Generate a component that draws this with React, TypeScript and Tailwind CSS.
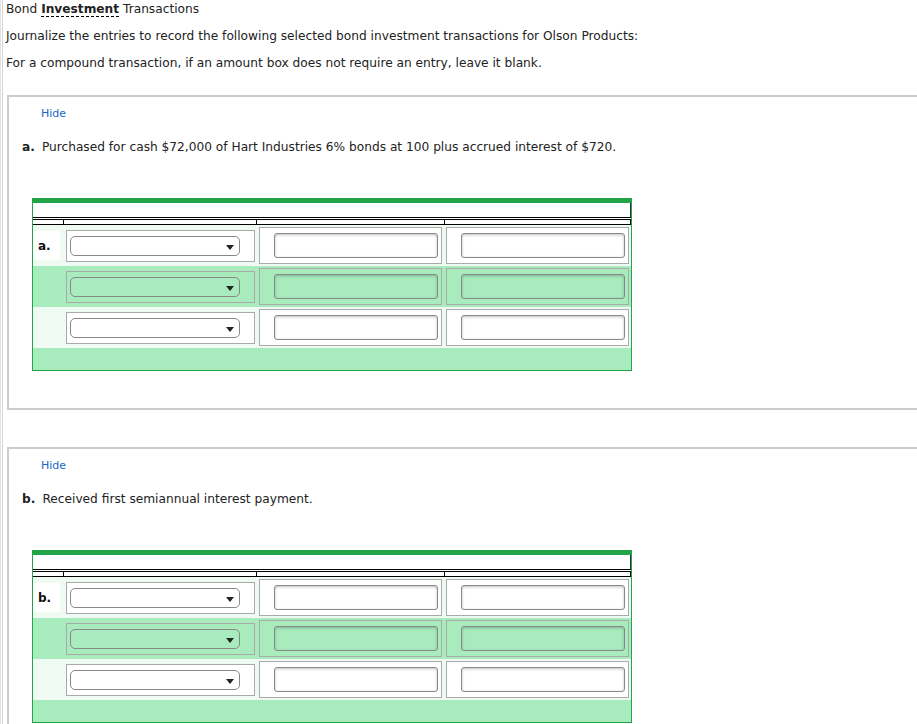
const font = { fontFamily: '"DejaVu Sans", Verdana, sans-serif' };

function Arrow() {
  return (
    <svg className="absolute right-[5px] top-[8px] w-[8px] h-[5px]" viewBox="0 0 8 5">
      <polygon points="0,0 8,0 4,5" fill="#222" />
    </svg>
  );
}

function EntryRow({ label, tone }: { label?: string; tone: "light" | "green" }) {
  const bg = tone === "green" ? "bg-[#a8ecbd]" : "bg-[#effaf2]";
  const fieldBg = tone === "green" ? "bg-[#a8ecbd]" : "bg-white";
  return (
    <div className={`flex h-[41px] ${bg}`}>
      <div className="w-[30px] pt-[6px]">
        {label && (
          <div className="h-[29px] w-[27px] bg-white flex items-center pl-[5px] text-[12px] font-bold text-[#111]">
            {label}
          </div>
        )}
      </div>
      <div className="w-[193px] pl-[3px] pt-[5px]">
        <div className={`h-[32px] w-[189px] border border-[#aaa] px-[3px] pt-[5px] ${fieldBg}`}>
          <div className={`relative h-[20px] w-[170px] rounded-[5px] border border-[#888] ${fieldBg}`}>
            <Arrow />
          </div>
        </div>
      </div>
      <div className="w-[188px] pl-[3px] pt-[2px]">
        <div className={`h-[37px] w-[183px] border border-[#aaa] pl-[14px] pt-[5px] ${fieldBg}`}>
          <div
            className={`h-[25px] w-[164px] rounded-[3px] border border-[#888] shadow-[inset_0_1px_3px_rgba(0,0,0,0.25)] ${fieldBg}`}
          />
        </div>
      </div>
      <div className="w-[187px] pl-[2px] pt-[2px]">
        <div className={`h-[37px] w-[183px] border border-[#aaa] pl-[14px] pt-[5px] ${fieldBg}`}>
          <div
            className={`h-[25px] w-[164px] rounded-[3px] border border-[#888] shadow-[inset_0_1px_3px_rgba(0,0,0,0.25)] ${fieldBg}`}
          />
        </div>
      </div>
    </div>
  );
}

function JournalTable({ label }: { label: string }) {
  return (
    <div className="ml-[23px] w-[600px] border-x border-b border-[#22a54a] border-t-[5px]">
      <div className="h-[14px] bg-white border-r border-[#333]" />
      <div className="h-[2px] border-t border-black bg-white" />
      <div className="flex h-[6px] border-y border-black bg-white">
        <div className="w-[30px]" />
        <div className="w-[193px] border-l border-black" />
        <div className="w-[188px] border-l border-black" />
        <div className="flex-1 border-x border-black" />
      </div>
      <EntryRow label={label} tone="light" />
      <EntryRow tone="green" />
      <EntryRow tone="light" />
      <div className="h-[22px] bg-[#a8ecbd]" />
    </div>
  );
}

function Part({ letter, text }: { letter: string; text: string }) {
  return (
    <div className="ml-[4px] w-[940px] border-2 border-[#ccc] bg-white pb-[37px]">
      <div className="pl-[32px] pt-[10px] text-[11px] leading-[14px] text-[#1a66c9]">Hide</div>
      <div className="pl-[13px] pt-[18px] text-[12.2px] leading-[16px] text-[#222]">
        <span className="font-bold">{letter}.</span>
        <span className="ml-[7px]">{text}</span>
      </div>
      <div className="pt-[43px]">
        <JournalTable label={`${letter}.`} />
      </div>
    </div>
  );
}

export default function App() {
  return (
    <div className="w-[917px] h-[724px] overflow-hidden bg-white" style={font}>
      <div className="h-full border-l border-[#e2e2e2] pl-px">
        <div className="h-full border-l border-[#d6d6d6]">
          <div className="pl-[3px] text-[12.2px] leading-[16px] text-[#222]">
            <div className="pt-px">
              Bond{" "}
              <span className="font-bold border-b border-dashed border-black">Investment</span>{" "}
              Transactions
            </div>
            <div className="pt-[11px]">
              Journalize the entries to record the following selected bond investment transactions for Olson
              Products:
            </div>
            <div className="pt-[11px]">
              For a compound transaction, if an amount box does not require an entry, leave it blank.
            </div>
          </div>
          <div className="pt-[24px]">
            <Part letter="a" text="Purchased for cash $72,000 of Hart Industries 6% bonds at 100 plus accrued interest of $720." />
          </div>
          <div className="pt-[37px]">
            <Part letter="b" text="Received first semiannual interest payment." />
          </div>
        </div>
      </div>
    </div>
  );
}
